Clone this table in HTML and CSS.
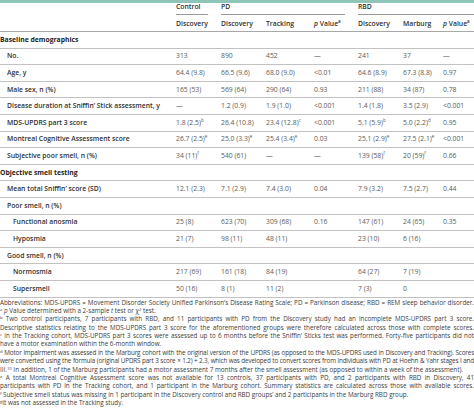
FILE: index.html
```html
<!DOCTYPE html>
<html>
<head>
<meta charset="utf-8">
<link rel="stylesheet" href="styles.css">
</head>
<body>
<div class="page">
  <div class="topbar"></div>
  <table class="data">
    <colgroup>
      <col class="c-label"><col class="c1"><col class="c2"><col class="c3"><col class="c4"><col class="c5"><col class="c6"><col class="c7">
    </colgroup>
    <thead>
      <tr class="grp">
        <th></th>
        <th><div class="ul">Control</div></th>
        <th colspan="3"><div class="ul">PD</div></th>
        <th colspan="3" class="last"><div class="ul">RBD</div></th>
      </tr>
      <tr class="sub">
        <th></th>
        <th>Discovery</th>
        <th>Discovery</th>
        <th>Tracking</th>
        <th><i>p</i> Value<sup>a</sup></th>
        <th>Discovery</th>
        <th>Marburg</th>
        <th><i>p</i> Value<sup>a</sup></th>
      </tr>
    </thead>
    <tbody>
      <tr class="sec"><td colspan="8">Baseline demographics</td></tr>
      <tr><td class="l1">No.</td><td>313</td><td>890</td><td>452</td><td>—</td><td>241</td><td>37</td><td>—</td></tr>
      <tr><td class="l1">Age, y</td><td>64.4 (9.8)</td><td>66.5 (9.6)</td><td>68.0 (9.0)</td><td>&lt;0.01</td><td>64.6 (8.9)</td><td>67.3 (8.8)</td><td>0.97</td></tr>
      <tr><td class="l1">Male sex, n (%)</td><td>165 (53)</td><td>569 (64)</td><td>290 (64)</td><td>0.93</td><td>211 (88)</td><td>34 (87)</td><td>0.78</td></tr>
      <tr><td class="l1">Disease duration at Sniffin’ Stick assessment, y</td><td>—</td><td>1.2 (0.9)</td><td>1.9 (1.0)</td><td>&lt;0.001</td><td>1.4 (1.8)</td><td>3.5 (2.9)</td><td>&lt;0.001</td></tr>
      <tr><td class="l1">MDS-UPDRS part 3 score</td><td>1.8 (2.5)<sup>b</sup></td><td>26.4 (10.8)</td><td>23.4 (12.8)<sup>c</sup></td><td>&lt;0.001</td><td>5.1 (5.9)<sup>b</sup></td><td>5.0 (2.2)<sup>d</sup></td><td>0.95</td></tr>
      <tr><td class="l1">Montreal Cognitive Assessment score</td><td>26.7 (2.5)<sup>e</sup></td><td>25.0 (3.3)<sup>e</sup></td><td>25.4 (3.4)<sup>e</sup></td><td>0.03</td><td>25.1 (2.9)<sup>e</sup></td><td>27.5 (2.1)<sup>e</sup></td><td>&lt;0.001</td></tr>
      <tr><td class="l1">Subjective poor smell, n (%)</td><td>34 (11)<sup>f</sup></td><td>540 (61)</td><td>—</td><td>—</td><td>139 (58)<sup>f</sup></td><td>20 (59)<sup>f</sup></td><td>0.66</td></tr>
      <tr class="sec"><td colspan="8">Objective smell testing</td></tr>
      <tr><td class="l1">Mean total Sniffin’ score (SD)</td><td>12.1 (2.3)</td><td>7.1 (2.9)</td><td>7.4 (3.0)</td><td>0.04</td><td>7.9 (3.2)</td><td>7.5 (2.7)</td><td>0.44</td></tr>
      <tr><td class="l1">Poor smell, n (%)</td><td></td><td></td><td></td><td></td><td></td><td></td><td></td></tr>
      <tr><td class="l2">Functional anosmia</td><td>25 (8)</td><td>623 (70)</td><td>309 (68)</td><td>0.16</td><td>147 (61)</td><td>24 (65)</td><td>0.35</td></tr>
      <tr><td class="l2">Hyposmia</td><td>21 (7)</td><td>98 (11)</td><td>48 (11)</td><td></td><td>23 (10)</td><td>6 (16)</td><td></td></tr>
      <tr><td class="l1">Good smell, n (%)</td><td></td><td></td><td></td><td></td><td></td><td></td><td></td></tr>
      <tr><td class="l2">Normosmia</td><td>217 (69)</td><td>161 (18)</td><td>84 (19)</td><td></td><td>64 (27)</td><td>7 (19)</td><td></td></tr>
      <tr><td class="l2">Supersmell</td><td>50 (16)</td><td>8 (1)</td><td>11 (2)</td><td></td><td>7 (3)</td><td>0</td><td></td></tr>
    </tbody>
  </table>
  <div class="notes">
    <div class="ln j">Abbreviations: MDS-UPDRS = Movement Disorder Society Unified Parkinson’s Disease Rating Scale; PD = Parkinson disease; RBD = REM sleep behavior disorder.</div>
    <div class="ln"><sup>a</sup> <i>p</i> Value determined with a 2-sample <i>t</i> test or χ<sup>2</sup> test.</div>
    <div class="ln j"><sup>b</sup> Two control participants, 7 participants with RBD, and 11 participants with PD from the Discovery study had an incomplete MDS-UPDRS part 3 score.</div>
    <div class="ln j">Descriptive statistics relating to the MDS-UPDRS part 3 score for the aforementioned groups were therefore calculated across those with complete scores.</div>
    <div class="ln j"><sup>c</sup> In the Tracking cohort, MDS-UPDRS part 3 scores were assessed up to 6 months before the Sniffin’ Sticks test was performed. Forty-five participants did not</div>
    <div class="ln">have a motor examination within the 6-month window.</div>
    <div class="ln j tight"><sup>d</sup> Motor impairment was assessed in the Marburg cohort with the original version of the UPDRS (as opposed to the MDS-UPDRS used in Discovery and Tracking). Scores</div>
    <div class="ln j tight">were converted using the formula (original UPDRS part 3 score × 1.2) + 2.3, which was developed to convert scores from individuals with PD at Hoehn &amp; Yahr stages I and</div>
    <div class="ln">III.<sup>10</sup> In addition, 1 of the Marburg participants had a motor assessment 7 months after the smell assessment (as opposed to within a week of the assessment).</div>
    <div class="ln j"><sup>e</sup> A total Montreal Cognitive Assessment score was not available for 13 controls, 37 participants with PD, and 2 participants with RBD in Discovery, 41</div>
    <div class="ln j">participants with PD in the Tracking cohort, and 1 participant in the Marburg cohort. Summary statistics are calculated across those with available scores.</div>
    <div class="ln"><sup>f</sup> Subjective smell status was missing in 1 participant in the Discovery control and RBD groups’ and 2 participants in the Marburg RBD group.</div>
    <div class="ln"><sup>g</sup>It was not assessed in the Tracking study.</div>
  </div>
</div>
</body>
</html>
```

FILE: styles.css
```css
html, body {
  margin: 0;
  padding: 0;
  background: #ffffff;
}
.page {
  width: 474px;
  height: 408px;
  overflow: hidden;
  font-family: "Open Sans", "DejaVu Sans", sans-serif;
  color: #333333;
}
.topbar {
  height: 3px;
  background: #8ec5b8;
}
.data {
  width: 474px;
  border-collapse: collapse;
  table-layout: fixed;
  font-size: 6.8px;
}
.c-label { width: 176px; }
.c1 { width: 45px; }
.c2 { width: 45px; }
.c3 { width: 48px; }
.c4 { width: 44px; }
.c5 { width: 45px; }
.c6 { width: 40px; }
.c7 { width: 31px; }
th {
  font-weight: 600;
  text-align: left;
  padding: 0 13px 0 0;
  white-space: nowrap;
  color: #2e2e2e;
}
th.last { padding-right: 0; }
.grp th {
  height: 11px;
  vertical-align: bottom;
}
.ul {
  border-bottom: 1px solid #9a9a9a;
  padding-bottom: 3px;
  line-height: 8px;
}
.sub th {
  height: 15px;
  border-bottom: 1px solid #a8a8a8;
  padding-top: 1px;
}
td {
  height: 15.6px;
  padding: 0;
  border-bottom: 1px solid #c2c2c2;
  white-space: nowrap;
  color: #5a5a5a;
  line-height: 8px;
}
td:first-child {
  font-weight: 600;
  color: #303030;
}
.sec td {
  font-weight: 700;
  color: #222222;
  padding-left: 0;
}
.l1 { padding-left: 7px; }
.l2 { padding-left: 13px; }
sup {
  font-size: 4.5px;
  vertical-align: 3px;
  line-height: 0;
}
th sup { font-weight: 600; }
.notes {
  padding-top: 1px;
  font-size: 6.3px;
  line-height: 8.4px;
  color: #3c3c3c;
}
.ln {
  white-space: nowrap;
  height: 8.4px;
}
.ln.j {
  white-space: normal;
  text-align: justify;
  text-align-last: justify;
  word-spacing: -0.5px;
}
.ln.j.tight {
  letter-spacing: -0.15px;
  word-spacing: -0.8px;
}
.notes sup {
  font-size: 4.2px;
  vertical-align: 2.5px;
}
```
